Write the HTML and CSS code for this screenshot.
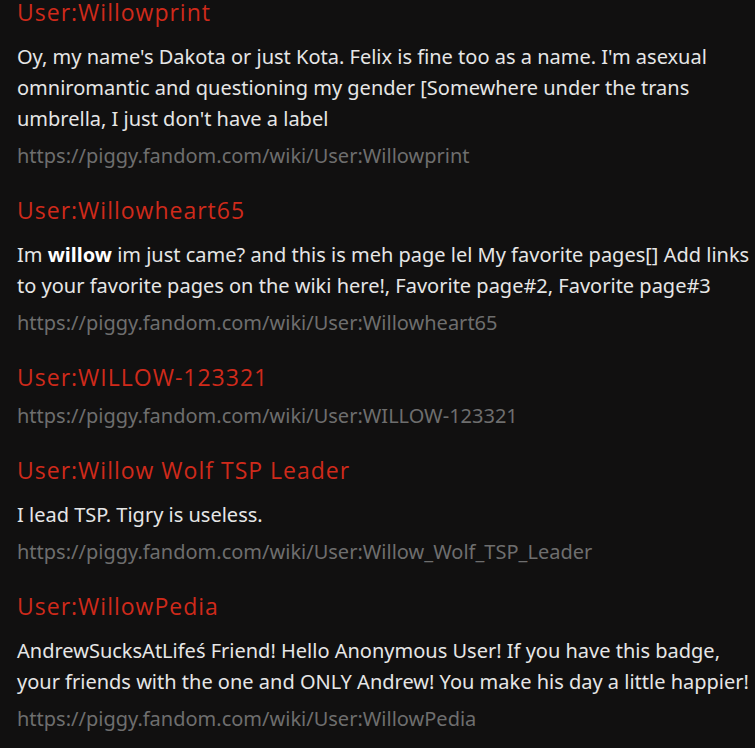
FILE: index.html
```html
<!DOCTYPE html>
<html lang="en">
<head>
<meta charset="utf-8">
<title>Search results</title>
<link rel="stylesheet" href="styles.css">
</head>
<body>
<ul class="results">
  <li class="result">
    <a class="result-title" href="#">User:Willowprint</a>
    <p class="result-snippet">Oy, my name's Dakota or just Kota. Felix is fine too as a name. I'm asexual omniromantic and questioning my gender [Somewhere under the trans umbrella, I just don't have a label</p>
    <a class="result-url" href="#">https://piggy.fandom.com/wiki/User:Willowprint</a>
  </li>
  <li class="result">
    <a class="result-title" href="#">User:Willowheart65</a>
    <p class="result-snippet">Im <b>willow</b> im just came? and this is meh page lel My favorite pages[] Add links to your favorite pages on the wiki here!, Favorite page#2, Favorite page#3</p>
    <a class="result-url" href="#">https://piggy.fandom.com/wiki/User:Willowheart65</a>
  </li>
  <li class="result">
    <a class="result-title" href="#">User:WILLOW-123321</a>
    <a class="result-url" href="#">https://piggy.fandom.com/wiki/User:WILLOW-123321</a>
  </li>
  <li class="result">
    <a class="result-title" href="#">User:Willow Wolf TSP Leader</a>
    <p class="result-snippet">I lead TSP. Tigry is useless.</p>
    <a class="result-url" href="#">https://piggy.fandom.com/wiki/User:Willow_Wolf_TSP_Leader</a>
  </li>
  <li class="result">
    <a class="result-title" href="#">User:WillowPedia</a>
    <p class="result-snippet">AndrewSucksAtLifeś Friend! Hello Anonymous User! If you have this badge, your friends with the one and ONLY Andrew! You make his day a little happier!</p>
    <a class="result-url" href="#">https://piggy.fandom.com/wiki/User:WillowPedia</a>
  </li>
</ul>
</body>
</html>
```

FILE: styles.css
```css
html, body {
  margin: 0;
  padding: 0;
  background: #111010;
}
body {
  font-family: "Noto Sans", "Open Sans", sans-serif;
  color: #e4e4e4;
  overflow: hidden;
}
.results {
  list-style: none;
  margin: 0;
  padding: 0 0 0 17px;
  display: flex;
  flex-direction: column;
  gap: 27px;
}
.result {
  display: flex;
  flex-direction: column;
  align-items: flex-start;
}
.result-title {
  color: #cf2a1b;
  text-decoration: none;
  font-family: "Open Sans", sans-serif;
  font-size: 23px;
  letter-spacing: 1px;
  line-height: 24px;
  margin-bottom: 11px;
}
.result-snippet {
  margin: 6px 0 6px;
  font-size: 20px;
  line-height: 31px;
  color: #e6e6e6;
}
.result-snippet b {
  font-weight: 700;
  color: #fff;
}
.result-url {
  color: #6e6e6e;
  text-decoration: none;
  font-size: 20px;
  line-height: 31px;
}
```
